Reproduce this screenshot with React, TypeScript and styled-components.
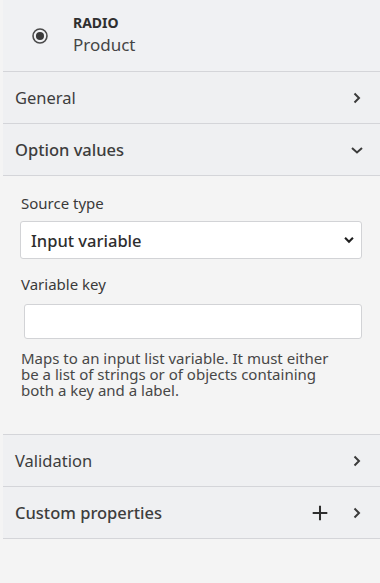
import React from "react";
import styled, { createGlobalStyle } from "styled-components";

const Global = createGlobalStyle`
  html, body { margin: 0; padding: 0; background: #f4f4f4; }
  body { font-family: "Noto Sans", "Open Sans", sans-serif; color: #393939; }
  * { box-sizing: border-box; }
`;

const Panel = styled.div`
  width: 380px;
  min-height: 583px;
  padding-left: 3px;
  background: #f4f4f4;
  display: flex;
  flex-direction: column;
`;

const Header = styled.div`
  height: 72px;
  display: flex;
  align-items: center;
  gap: 24px;
  padding-left: 28px;
  background: #f0f1f3;
  border-bottom: 1.5px solid #d4d5d9;
`;

const HeaderText = styled.div`
  display: flex;
  flex-direction: column;
  line-height: 22px;
  margin-top: -4px;
`;

const Kind = styled.span`
  font-size: 14px;
  font-weight: 700;
  color: #2f2f2f;
`;

const Name = styled.span`
  font-size: 17px;
  color: #454545;
`;

const Row = styled.div`
  height: 52px;
  display: flex;
  align-items: center;
  padding: 0 15px 0 12px;
  background: #eff0f2;
  border-bottom: 1.5px solid #d4d5d9;
`;

const RowTitle = styled.span<{ $strong?: boolean }>`
  flex: 1;
  font-size: 16.5px;
  font-weight: ${(p) => (p.$strong ? 500 : 400)};
  color: #3d3d3d;
`;

const Icons = styled.div`
  display: flex;
  align-items: center;
  gap: 20px;
`;

const Content = styled.div`
  padding: 17px 18px 36px 17px;
  display: flex;
  flex-direction: column;
  border-bottom: 1.5px solid #d4d5d9;
`;

const Label = styled.label`
  font-size: 15px;
  color: #3a3a3a;
  margin: 0 0 8px 1px;
  line-height: 20px;
`;

const SelectBox = styled.div`
  height: 38px;
  background: #fff;
  border: 1.5px solid #d2d3d6;
  border-radius: 3px;
  display: flex;
  align-items: center;
  justify-content: space-between;
  padding: 0 5px 0 10px;
  font-size: 16.5px;
  font-weight: 500;
  color: #2e2e2e;
  margin-bottom: 15px;
`;

const TextInput = styled.div`
  height: 35px;
  margin: 2px 0 11px 4px;
  background: #fff;
  border: 1.5px solid #d2d3d6;
  border-radius: 3px;
`;

const Help = styled.p`
  margin: 0 0 0 1px;
  font-size: 15px;
  line-height: 16px;
  color: #474747;
  max-width: 328px;
`;

const Chevron = ({ dir }: { dir: "right" | "down" }) => (
  <svg width="16" height="16" viewBox="0 0 16 16">
    <path
      d={dir === "right" ? "M5.5 3.5 L10 8 L5.5 12.5" : "M3 6 L8 10.5 L13 6"}
      fill="none"
      stroke="#3b3b3b"
      strokeWidth="2"
    />
  </svg>
);

const Plus = () => (
  <svg width="18" height="18" viewBox="0 0 16 16">
    <path d="M8 1.5 V14.5 M1.5 8 H14.5" stroke="#2e2e2e" strokeWidth="1.8" />
  </svg>
);

const RadioIcon = () => (
  <svg width="18" height="18" viewBox="0 0 16 16">
    <circle cx="8" cy="8" r="6.2" fill="none" stroke="#4a4a4a" strokeWidth="1.4" />
    <circle cx="8" cy="8" r="3.6" fill="#3a3a3a" />
  </svg>
);

export default function App() {
  return (
    <>
      <Global />
      <Panel>
        <Header>
          <RadioIcon />
          <HeaderText>
            <Kind>RADIO</Kind>
            <Name>Product</Name>
          </HeaderText>
        </Header>
        <Row>
          <RowTitle>General</RowTitle>
          <Chevron dir="right" />
        </Row>
        <Row>
          <RowTitle $strong>Option values</RowTitle>
          <Chevron dir="down" />
        </Row>
        <Content>
          <Label>Source type</Label>
          <SelectBox>
            <span>Input variable</span>
            <svg width="14" height="14" viewBox="0 0 16 16">
              <path d="M3.5 5.5 L8 10 L12.5 5.5" fill="none" stroke="#1f1f1f" strokeWidth="2.4" />
            </svg>
          </SelectBox>
          <Label>Variable key</Label>
          <TextInput />
          <Help>
            Maps to an input list variable. It must either be a list of strings or of objects
            containing both a key and a label.
          </Help>
        </Content>
        <Row>
          <RowTitle>Validation</RowTitle>
          <Chevron dir="right" />
        </Row>
        <Row>
          <RowTitle $strong>Custom properties</RowTitle>
          <Icons>
            <Plus />
            <Chevron dir="right" />
          </Icons>
        </Row>
      </Panel>
    </>
  );
}
